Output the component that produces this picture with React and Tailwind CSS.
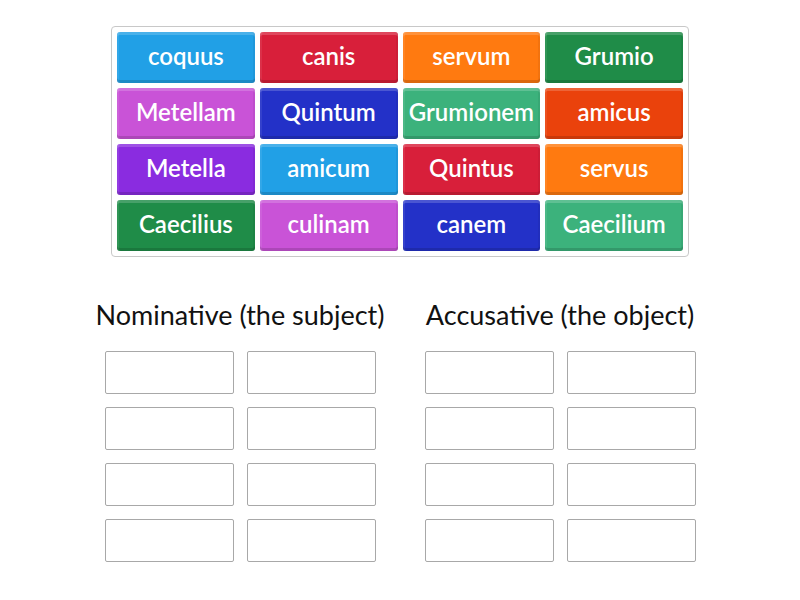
import React from 'react';

const TILES = [
  { t: 'coquus', c: 'bg-[#21a0e6]' },
  { t: 'canis', c: 'bg-[#d81f3a]' },
  { t: 'servum', c: 'bg-[#ff7a10]' },
  { t: 'Grumio', c: 'bg-[#1f8c48]' },
  { t: 'Metellam', c: 'bg-[#c953d7]' },
  { t: 'Quintum', c: 'bg-[#2331c8]' },
  { t: 'Grumionem', c: 'bg-[#3cb27c]' },
  { t: 'amicus', c: 'bg-[#ea420c]' },
  { t: 'Metella', c: 'bg-[#8a2ce0]' },
  { t: 'amicum', c: 'bg-[#21a0e6]' },
  { t: 'Quintus', c: 'bg-[#d81f3a]' },
  { t: 'servus', c: 'bg-[#ff7a10]' },
  { t: 'Caecilius', c: 'bg-[#1f8c48]' },
  { t: 'culinam', c: 'bg-[#c953d7]' },
  { t: 'canem', c: 'bg-[#2331c8]' },
  { t: 'Caecilium', c: 'bg-[#3cb27c]' },
];

function Group({ title }) {
  return (
    <div className="w-[271px] flex flex-col items-center">
      <h2 className="text-[27px] leading-[32px] text-[#111] whitespace-nowrap">{title}</h2>
      <div className="mt-[20px] grid grid-cols-2 gap-x-[14px] gap-y-[13px]">
        {Array.from({ length: 8 }).map((_, i) => (
          <div key={i} className="w-[129px] h-[43px] bg-white border border-[#a8a8a8] rounded-[2px]" />
        ))}
      </div>
    </div>
  );
}

export default function App() {
  return (
    <div className="w-[800px] h-[600px] bg-white font-['Lato','Open_Sans',sans-serif]">
      <div className="pt-[26px] flex justify-center">
        <div className="w-[578px] border border-[#c8c8c8] rounded-[4px] p-[5px] grid grid-cols-4 gap-[5px]">
          {TILES.map((tile, i) => (
            <div key={i}
              className={`${tile.c} h-[51px] pb-[3px] rounded-[3px] flex items-center justify-center text-white text-[24px] font-semibold shadow-[inset_0_3px_0_rgba(255,255,255,0.18),inset_0_-3px_0_rgba(0,0,0,0.14),inset_2px_0_0_rgba(255,255,255,0.08),inset_-2px_0_0_rgba(0,0,0,0.05)]`}>
              {tile.t}
            </div>
          ))}
        </div>
      </div>
      <div className="mt-[42px] flex justify-center gap-[49px]">
        <Group title="Nominative (the subject)" />
        <Group title="Accusative (the object)" />
      </div>
    </div>
  );
}
